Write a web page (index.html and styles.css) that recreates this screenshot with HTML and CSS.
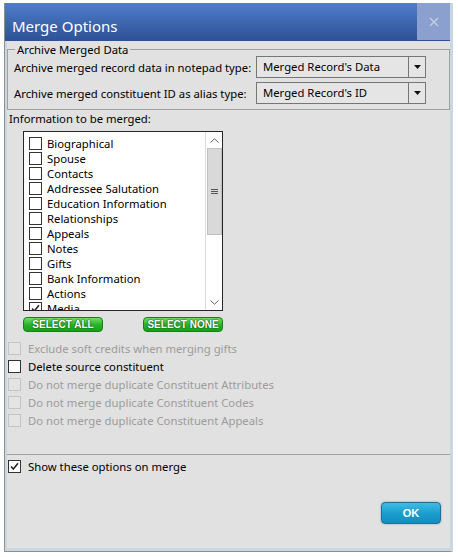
FILE: index.html
```html
<!DOCTYPE html>
<html>
<head>
<meta charset="utf-8">
<title>Merge Options</title>
<link rel="stylesheet" href="styles.css">
</head>
<body>
<div class="window">
  <div class="titlebar">
    <div class="title">Merge Options</div>
    <div class="close"><svg width="10" height="10" viewBox="0 0 10 10"><path d="M1 1 L9 9 M9 1 L1 9" stroke="#c6cfe4" stroke-width="1.3" fill="none"/></svg></div>
  </div>
  <div class="client">
    <fieldset class="group">
      <legend>Archive Merged Data</legend>
      <div class="grid">
        <span class="field-label">Archive merged record data in notepad type:</span>
        <div class="combo"><span class="combo-text">Merged Record's Data</span><span class="combo-btn"><svg width="7" height="4" viewBox="0 0 7 4"><path d="M0 0 H7 L3.5 4 Z" fill="#111"/></svg></span></div>
        <span class="field-label">Archive merged constituent ID as alias type:</span>
        <div class="combo"><span class="combo-text">Merged Record's ID</span><span class="combo-btn"><svg width="7" height="4" viewBox="0 0 7 4"><path d="M0 0 H7 L3.5 4 Z" fill="#111"/></svg></span></div>
      </div>
    </fieldset>
    <div class="info-label">Information to be merged:</div>
    <div class="listbox">
      <div class="items">
        <div class="item"><span class="cb"></span>Biographical</div>
        <div class="item"><span class="cb"></span>Spouse</div>
        <div class="item"><span class="cb"></span>Contacts</div>
        <div class="item"><span class="cb"></span>Addressee Salutation</div>
        <div class="item"><span class="cb"></span>Education Information</div>
        <div class="item"><span class="cb"></span>Relationships</div>
        <div class="item"><span class="cb"></span>Appeals</div>
        <div class="item"><span class="cb"></span>Notes</div>
        <div class="item"><span class="cb"></span>Gifts</div>
        <div class="item"><span class="cb"></span>Bank Information</div>
        <div class="item"><span class="cb"></span>Actions</div>
        <div class="item"><span class="cb"><svg width="11" height="11" viewBox="0 0 11 11"><path d="M2 5.5 L4.3 8 L9 2.2" fill="none" stroke="#222" stroke-width="1.5"/></svg></span>Media</div>
      </div>
      <div class="scrollbar">
        <div class="sb-btn"><svg width="9" height="5" viewBox="0 0 9 5"><path d="M0.5 4.5 L4.5 0.8 L8.5 4.5" fill="none" stroke="#606060" stroke-width="1"/></svg></div>
        <div class="thumb"><svg width="7" height="6" viewBox="0 0 7 6"><path d="M0 0.5 H7 M0 2.5 H7 M0 4.5 H7" stroke="#555" stroke-width="1"/></svg></div>
        <div class="track"></div>
        <div class="sb-btn"><svg width="9" height="5" viewBox="0 0 9 5"><path d="M0.5 0.5 L4.5 4.2 L8.5 0.5" fill="none" stroke="#606060" stroke-width="1"/></svg></div>
      </div>
    </div>
    <div class="btn-row">
      <button class="green">SELECT ALL</button>
      <button class="green">SELECT NONE</button>
    </div>
    <div class="options">
      <div class="opt disabled"><span class="cb"></span>Exclude soft credits when merging gifts</div>
      <div class="opt"><span class="cb"></span>Delete source constituent</div>
      <div class="opt disabled"><span class="cb"></span>Do not merge duplicate Constituent Attributes</div>
      <div class="opt disabled"><span class="cb"></span>Do not merge duplicate Constituent Codes</div>
      <div class="opt disabled"><span class="cb"></span>Do not merge duplicate Constituent Appeals</div>
    </div>
    <div class="sep"></div>
    <div class="opt show"><span class="cb"><svg width="11" height="11" viewBox="0 0 11 11"><path d="M2 5.5 L4.3 8 L9 2.2" fill="none" stroke="#222" stroke-width="1.5"/></svg></span>Show these options on merge</div>
    <div class="footer"><button class="ok">OK</button></div>
  </div>
</div>
</body>
</html>
```
FILE: styles.css
```css
body {
  margin: 0;
  padding: 3px 0 0 4px;
  background: #ffffff;
  font-family: "Noto Sans", "Open Sans", sans-serif;
  font-size: 11.3px;
  color: #000;
}

.window {
  width: 449px;
  height: 549px;
  box-sizing: border-box;
  border-left: 1px solid #8f8f8f;
  border-bottom: 1px solid #8f8f8f;
  border-right: 3px solid #cad6e2;
  display: flex;
  flex-direction: column;
}

.titlebar {
  height: 38px;
  flex: none;
  background: linear-gradient(#4f7dcc, #2d5195);
  display: flex;
}

.title {
  color: #fff;
  font-size: 15px;
  line-height: 20px;
  padding: 13px 0 0 7px;
}

.close {
  margin-left: auto;
  width: 33px;
  height: 37px;
  background: #8ba0cf;
  display: flex;
  align-items: center;
  justify-content: center;
}

.client {
  flex: 1;
  background: #e1e1e1;
  border-left: 2px solid #cad6e2;
  border-bottom: 3px solid #cad6e2;
  display: flex;
  flex-direction: column;
}

.group {
  margin: 2px 0 0 0;
  border: 1px solid #a0a0a0;
  padding: 0 23px 5px 6px;
  min-width: 0;
}

.group legend {
  padding: 0 2px;
  margin-left: 1px;
  line-height: 13px;
}

.grid {
  display: grid;
  grid-template-columns: 1fr 170px;
  row-gap: 4px;
  align-items: center;
}

.field-label {
  white-space: nowrap;
}

.combo {
  height: 22px;
  box-sizing: border-box;
  border: 1px solid #767676;
  background: #e5e5e5;
  display: flex;
}

.combo-text {
  flex: 1;
  padding-left: 6px;
  line-height: 20px;
}

.combo-btn {
  width: 16px;
  border-left: 1px solid #767676;
  display: flex;
  align-items: center;
  justify-content: center;
}

.info-label {
  margin: 2px 0 0 2px;
  line-height: 14px;
}

.listbox {
  margin: 5px 0 0 16px;
  width: 200px;
  height: 180px;
  box-sizing: border-box;
  border: 1px solid #262626;
  background: #fff;
  display: flex;
}

.items {
  flex: 1;
  overflow: hidden;
  padding: 4px 0 0 5px;
}

.item {
  height: 15px;
  display: flex;
  align-items: center;
  white-space: nowrap;
}

.cb {
  width: 13px;
  height: 13px;
  box-sizing: border-box;
  border: 1px solid #333;
  background: #fff;
  margin-right: 5px;
  flex: none;
  display: flex;
  align-items: center;
  justify-content: center;
}

.scrollbar {
  width: 17px;
  box-sizing: border-box;
  border-left: 1px solid #dcdcdc;
  display: flex;
  flex-direction: column;
}

.sb-btn {
  height: 16px;
  flex: none;
  display: flex;
  align-items: center;
  justify-content: center;
}

.thumb {
  height: 87px;
  flex: none;
  margin-left: 1px;
  box-sizing: border-box;
  background: #d9d9d9;
  border: 1px solid #c0c0c0;
  display: flex;
  align-items: center;
  justify-content: center;
}

.track {
  flex: 1;
}

.btn-row {
  margin: 6px 0 0 16px;
  width: 200px;
  display: flex;
  justify-content: space-between;
}

.green {
  width: 80px;
  height: 15px;
  padding: 0;
  border: 1px solid #1d7a1d;
  border-radius: 4px;
  background: linear-gradient(#72de62, #2cb52e 50%, #15a018);
  color: #fff;
  font: bold 10px/13px "Liberation Sans", Arial, sans-serif;
  text-shadow: 0 0 2px #0b4f0b, 0 0 1px #0b4f0b;
}

.options {
  margin-top: 7px;
}

.opt {
  height: 18px;
  display: flex;
  align-items: center;
  padding-left: 1px;
  white-space: nowrap;
}

.opt .cb {
  margin-right: 7px;
}

.opt.disabled {
  color: #9c9c9c;
}

.opt.disabled .cb {
  border-color: #c4c4c4;
  background: #e4e4e4;
}

.sep {
  margin-top: 25px;
  height: 1px;
  background: #a0a0a0;
}

.opt.show {
  margin-top: 2px;
}

.footer {
  margin-top: 27px;
  display: flex;
  justify-content: flex-end;
  padding-right: 9px;
}

.ok {
  width: 60px;
  height: 22px;
  padding: 0;
  border: 1px solid #1c6f96;
  border-radius: 4px;
  background: linear-gradient(#3fbbe5, #1a9ccc 55%, #128ebf);
  box-shadow: 0 0 2px rgba(30, 90, 130, 0.5);
  color: #fff;
  font: bold 11px "Liberation Sans", Arial, sans-serif;
}
```
